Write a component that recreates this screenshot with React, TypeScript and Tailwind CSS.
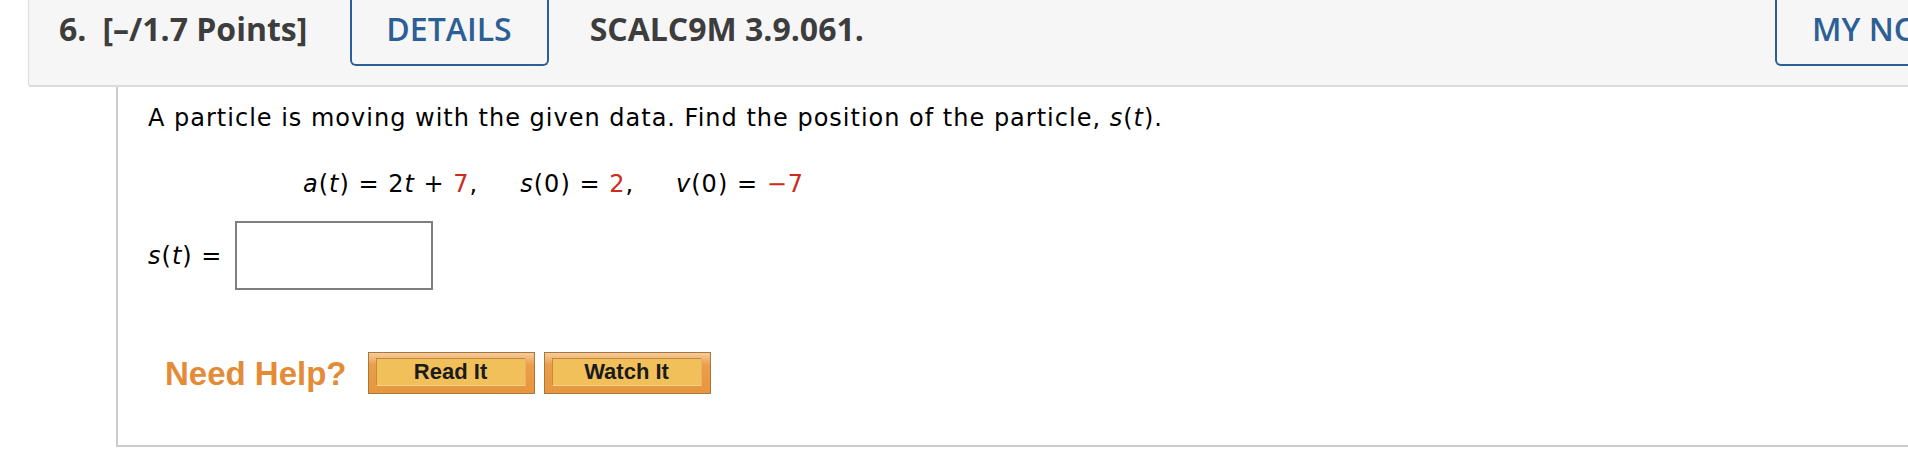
import React from "react";

function HelpButton({ label }: { label: string }) {
  return (
    <button
      type="button"
      className="w-[167px] h-[42px] border border-[#a8773a] bg-linear-to-b from-[#f6cc9c] via-[#eb9d48] via-30% to-[#e8963e] pt-[5px] pb-[7px] pl-[7px] pr-[8px] flex"
    >
      <span className="flex-1 flex items-center justify-center border border-[#c08c3c] border-b-[#f7d48a] border-r-[#e7b658] bg-[#f2c05a] text-[22px] font-bold text-[#1b1b1b] font-['Liberation_Sans',Arial,sans-serif] leading-none">
        {label}
      </span>
    </button>
  );
}

export default function App() {
  const red = "text-[#cc2b20]";

  return (
    <div className="w-[1908px] h-[474px] overflow-hidden bg-white">
      {/* question header */}
      <div className="ml-[28px] w-[2000px] h-[87px] flex items-start bg-[#f6f6f6] border-l border-b-2 border-[#dcdcdc] rounded-bl-[3px] font-['Open_Sans',sans-serif] text-[32px] leading-[40px]">
        <div className="pl-[30px] pt-[9px] font-bold text-[#3d3d3d] whitespace-nowrap">
          6.<span className="ml-[16px]">[–/1.7 Points]</span>
        </div>
        <div className="ml-[43px] h-[66px] pl-[34px] pr-[35px] pt-[9px] border-2 border-t-0 border-[#2c5f95] rounded-b-[6px] font-semibold text-[#2c5f95]">
          DETAILS
        </div>
        <div className="ml-[41px] pt-[9px] font-bold text-[#3d3d3d] whitespace-nowrap">SCALC9M 3.9.061.</div>
        <div className="ml-auto mr-[32px] w-[221px] h-[66px] pl-[35px] pt-[9px] border-2 border-t-0 border-[#2c5f95] rounded-b-[6px] font-semibold text-[#2c5f95] whitespace-nowrap">
          MY NOTES
        </div>
      </div>

      {/* question body */}
      <div className="ml-[116px] w-[1900px] h-[360px] border-l-2 border-b-2 border-[#cccccc] pl-[30px] pt-[17px] font-['DejaVu_Sans',Verdana,sans-serif] text-[24px] leading-[28px] tracking-[1px] text-black">
        <p>
          A particle is moving with the given data. Find the position of the particle, <i>s</i>(<i>t</i>).
        </p>

        <p className="mt-[38px] ml-[155px] whitespace-nowrap">
          <i>a</i>(<i>t</i>) = 2<i>t</i> + <span className={red}>7</span>,
          <span className="inline-block w-[42px]" />
          <i>s</i>(0) = <span className={red}>2</span>,
          <span className="inline-block w-[42px]" />
          <i>v</i>(0) = <span className={red}>−7</span>
        </p>

        <div className="mt-[23px] flex items-center">
          <span className="whitespace-nowrap">
            <i>s</i>(<i>t</i>) =
          </span>
          <input
            type="text"
            className="ml-[13px] w-[198px] h-[69px] border-2 border-[#7f7f7f] bg-white outline-none"
          />
        </div>

        <div className="mt-[62px] ml-[17px] flex items-center tracking-normal">
          <span className="text-[33px] font-bold text-[#e38b36] font-['Liberation_Sans',Arial,sans-serif] leading-none">
            Need Help?
          </span>
          <div className="ml-[21px] flex gap-[9px]">
            <HelpButton label="Read It" />
            <HelpButton label="Watch It" />
          </div>
        </div>
      </div>
    </div>
  );
}
